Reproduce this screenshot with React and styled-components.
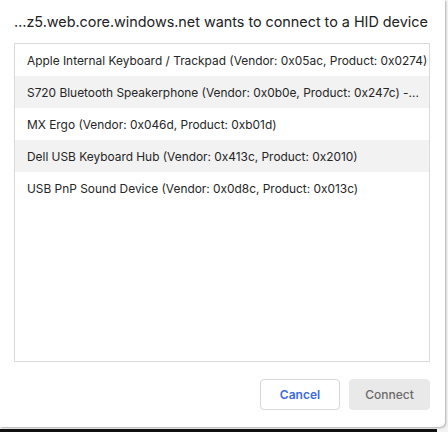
import React from "react";
import styled, { createGlobalStyle } from "styled-components";

const Global = createGlobalStyle`
  html, body { margin: 0; padding: 0; }
  body {
    background: #f3f3f3;
    font-family: Inter, "Liberation Sans", Arial, sans-serif;
    width: 448px;
    height: 432px;
    overflow: hidden;
  }
`;

const Page = styled.div`
  display: flex;
  flex-direction: column;
  width: 448px;
  height: 432px;
`;

const Dialog = styled.div`
  box-sizing: border-box;
  width: 445px;
  height: 427px;
  background: #ffffff;
  border-bottom-right-radius: 5px;
  box-shadow: 1px 1px 2px rgba(0, 0, 0, 0.28);
  padding: 0 15px 17px 14px;
  display: flex;
  flex-direction: column;
`;

const Title = styled.div`
  height: 43px;
  box-sizing: border-box;
  padding-top: 13px;
  font-size: 14.4px;
  line-height: 18px;
  color: #222222;
  white-space: nowrap;
  letter-spacing: -0.02px;
`;

const List = styled.div`
  box-sizing: border-box;
  height: 319px;
  border: 1px solid #dadada;
  display: flex;
  flex-direction: column;
  overflow: hidden;
`;

const Row = styled.div`
  flex: 0 0 32px;
  display: flex;
  align-items: center;
  padding: 0 0 0 12px;
  background: ${(p) => (p.$shaded ? "#f2f2f2" : "#ffffff")};
  font-size: 11.9px;
  color: #262626;
  min-width: 0;
`;

const RowText = styled.span`
  white-space: nowrap;
`;

const Actions = styled.div`
  margin-top: 17px;
  display: flex;
  justify-content: flex-end;
  gap: 9px;
`;

const Button = styled.button`
  box-sizing: border-box;
  height: 31px;
  width: ${(p) => p.$w}px;
  border-radius: 4px;
  font-family: Inter, "Liberation Sans", Arial, sans-serif;
  font-size: 12px;
  font-weight: ${(p) => (p.$primary ? 500 : 600)};
  cursor: pointer;
  border: 1px solid ${(p) => (p.$primary ? "#e9e9e9" : "#d8d8d8")};
  background: ${(p) => (p.$primary ? "#e9e9e9" : "#ffffff")};
  color: ${(p) => (p.$primary ? "#6b6b6b" : "#3d6be0")};
  padding: 0;
`;

const BottomBar = styled.div`
  margin-top: 2px;
  width: 437px;
  height: 3px;
  background: #111111;
`;

const devices = [
  "Apple Internal Keyboard / Trackpad (Vendor: 0x05ac, Product: 0x0274)",
  "S720 Bluetooth Speakerphone (Vendor: 0x0b0e, Product: 0x247c) -...",
  "MX Ergo (Vendor: 0x046d, Product: 0xb01d)",
  "Dell USB Keyboard Hub (Vendor: 0x413c, Product: 0x2010)",
  "USB PnP Sound Device (Vendor: 0x0d8c, Product: 0x013c)",
];

export default function App() {
  return (
    <>
      <Global />
      <Page>
        <Dialog>
          <Title>…z5.web.core.windows.net wants to connect to a HID device</Title>
          <List>
            {devices.map((d, i) => (
              <Row key={d} $shaded={i % 2 === 1}>
                <RowText>{d}</RowText>
              </Row>
            ))}
          </List>
          <Actions>
            <Button $w={80}>Cancel</Button>
            <Button $w={81} $primary>Connect</Button>
          </Actions>
        </Dialog>
        <BottomBar />
      </Page>
    </>
  );
}
